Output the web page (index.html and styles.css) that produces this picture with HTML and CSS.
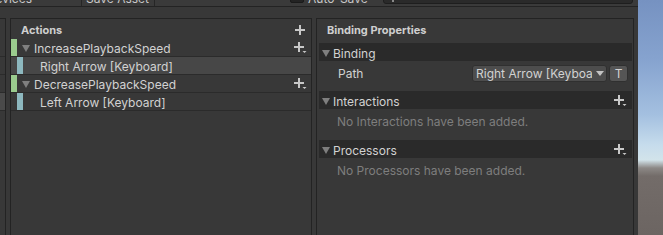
FILE: index.html
```
<!DOCTYPE html>
<html>
<head>
<meta charset="utf-8">
<link rel="stylesheet" href="styles.css">
</head>
<body>
<div class="main">
  <div class="toolbar">
    <div class="tb-btn devices"><span>All Devices</span></div>
    <div class="tb-btn save"><span>Save Asset</span></div>
    <div class="tb-fill"></div>
    <div class="tb-check"></div>
    <div class="tb-label"><span>Auto-Save</span></div>
    <div class="tb-search"><span class="search-mark"></span></div>
  </div>
  <div class="panes">
    <div class="stub">
      <div class="stub-head"></div>
      <div class="stub-row"></div>
      <div class="stub-row"></div>
      <div class="stub-row"></div>
      <div class="stub-row selected"></div>
    </div>
    <section class="panel actions">
      <div class="panel-head">
        <span class="title">Actions</span>
        <svg class="plus" width="10" height="10" viewBox="0 0 10 10"><rect x="0" y="4" width="10" height="2" fill="#c8c8c8"/><rect x="4" y="0" width="2" height="10" fill="#c8c8c8"/></svg>
      </div>
      <div class="row action">
        <span class="bar green"></span><span class="tri"></span><span class="label">IncreasePlaybackSpeed</span>
        <svg class="plus-dd" width="13" height="12" viewBox="0 0 13 12"><rect x="0" y="4" width="10" height="2" fill="#c8c8c8"/><rect x="4" y="0" width="2" height="10" fill="#c8c8c8"/><polygon points="8.5,9 12.5,9 10.5,11" fill="#c8c8c8"/></svg>
      </div>
      <div class="row binding selected">
        <span class="indent"></span><span class="bar blue"></span><span class="label">Right Arrow [Keyboard]</span>
      </div>
      <div class="row action">
        <span class="bar green"></span><span class="tri"></span><span class="label">DecreasePlaybackSpeed</span>
        <svg class="plus-dd" width="13" height="12" viewBox="0 0 13 12"><rect x="0" y="4" width="10" height="2" fill="#c8c8c8"/><rect x="4" y="0" width="2" height="10" fill="#c8c8c8"/><polygon points="8.5,9 12.5,9 10.5,11" fill="#c8c8c8"/></svg>
      </div>
      <div class="row binding">
        <span class="indent"></span><span class="bar blue"></span><span class="label">Left Arrow [Keyboard]</span>
      </div>
    </section>
    <section class="panel props">
      <div class="panel-head">
        <span class="title">Binding Properties</span>
      </div>
      <div class="props-body">
        <div class="fold-head"><span class="tri"></span><span class="fold-title">Binding</span></div>
        <div class="path-row">
          <span class="path-label">Path</span>
          <div class="dropdown"><span class="dd-text">Right Arrow [Keyboard]</span><span class="dd-arrow"></span></div>
          <div class="t-btn">T</div>
        </div>
        <div class="fold-head"><span class="tri"></span><span class="fold-title">Interactions</span>
          <svg class="plus-dd" width="13" height="12" viewBox="0 0 13 12"><rect x="0" y="4" width="10" height="2" fill="#c8c8c8"/><rect x="4" y="0" width="2" height="10" fill="#c8c8c8"/><polygon points="8.5,9 12.5,9 10.5,11" fill="#c8c8c8"/></svg>
        </div>
        <div class="empty">No Interactions have been added.</div>
        <div class="fold-head"><span class="tri"></span><span class="fold-title">Processors</span>
          <svg class="plus-dd" width="13" height="12" viewBox="0 0 13 12"><rect x="0" y="4" width="10" height="2" fill="#c8c8c8"/><rect x="4" y="0" width="2" height="10" fill="#c8c8c8"/><polygon points="8.5,9 12.5,9 10.5,11" fill="#c8c8c8"/></svg>
        </div>
        <div class="empty">No Processors have been added.</div>
      </div>
    </section>
  </div>
</div>
<div class="scene"></div>
</body>
</html>
```

FILE: styles.css
```
* { box-sizing: border-box; margin: 0; padding: 0; }
html, body { width: 663px; height: 235px; overflow: hidden; }
body {
  background: #383838;
  font-family: Inter, "Noto Sans", sans-serif;
  font-size: 12px;
  color: #d2d2d2;
  display: flex;
}
.main { width: 638px; display: flex; flex-direction: column; }
.scene {
  flex: 1;
  background: linear-gradient(to bottom, #7692c1 0px, #86a3cf 60px, #a4c0e0 115px, #c6dcec 145px, #d2e3ea 160px, #8c8886 168px, #736c69 176px, #6c6562 235px);
}

/* toolbar (cropped at the top) */
.toolbar {
  height: 7px;
  border-bottom: 1px solid #232323;
  background: #3a3a3a;
  display: flex;
  align-items: flex-end;
  overflow: hidden;
  line-height: 15px;
  color: #c8c8c8;
}
.tb-btn {
  height: 20px;
  display: flex;
  align-items: flex-end;
  overflow: hidden;
  border-right: 1px solid #262626;
  white-space: nowrap;
}
.devices { width: 82px; justify-content: flex-end; padding-right: 49px; }
.save { width: 73px; padding-left: 4px; }
.tb-fill { width: 135px; }
.tb-check {
  width: 14px; height: 14px;
  margin-bottom: 3px;
  background: #232323;
  border: 1px solid #1a1a1a;
  border-radius: 2px;
}
.tb-label { width: 79px; height: 20px; display: flex; align-items: flex-end; padding-left: 4px; white-space: nowrap; overflow: hidden; }
.tb-search {
  width: 250px; height: 20px;
  margin-bottom: 2px;
  background: #2a2a2a;
  border: 1px solid #1e1e1e;
  border-radius: 3px;
  position: relative;
}
.search-mark {
  position: absolute; left: 8px; bottom: 1px;
  width: 2px; height: 3px; background: #8a8a8a;
}

/* panes */
.panes { flex: 1; display: flex; gap: 4px; margin-top: 11px; }
.stub { width: 6px; border-top: 1px solid #232323; border-right: 1px solid #232323; display: flex; flex-direction: column; }
.stub-head { height: 20px; }
.stub-row { height: 18px; border-bottom: 1px solid #2b2b2b; }
.stub-row.selected { background: #4a4a4a; }

.panel { border: 1px solid #232323; border-bottom: none; display: flex; flex-direction: column; }
.actions { width: 302px; }
.props { width: 318px; }
.panel-head {
  height: 20px;
  display: flex;
  align-items: center;
  justify-content: space-between;
  padding: 0 6px 0 10px;
}
.title { font-size: 11px; font-weight: 700; color: #cfcfcf; margin-top: 1px; }
.plus { margin-top: 1px; }

.row {
  height: 18px;
  border-bottom: 1px solid #2b2b2b;
  display: flex;
  align-items: center;
}
.row.selected { background: #474747; }
.bar { width: 6px; align-self: stretch; }
.green { background: #9acb8e; }
.blue { background: #8db8bf; }
.indent { width: 6px; }
.tri {
  width: 0; height: 0;
  border-left: 4px solid transparent;
  border-right: 4px solid transparent;
  border-top: 7px solid #7f7f7f;
  margin-top: 2px;
}
.action .tri { margin-left: 5px; margin-right: 4px; }
.binding .label { margin-left: 17px; }
.label { white-space: nowrap; margin-top: 2px; }
.row .plus-dd { margin-left: auto; margin-right: 4px; margin-top: 1px; }

/* props */
.props-body { padding: 4px 1px 0 2px; display: flex; flex-direction: column; }
.fold-head {
  height: 18px;
  background: #2a2a2a;
  display: flex;
  align-items: center;
  padding-left: 3px;
}
.fold-title { margin-left: 3px; margin-top: 2px; }
.fold-head .plus-dd { margin-left: auto; margin-right: 5px; margin-top: 1px; }
.path-row {
  height: 30px;
  display: flex;
  align-items: flex-start;
  padding: 4px 4px 0 19px;
}
.path-label { line-height: 17px; }
.dropdown {
  margin-left: auto;
  width: 135px; height: 17px;
  background: #4d4d4d;
  border: 1px solid #303030;
  border-radius: 3px;
  display: flex;
  align-items: center;
  padding-left: 3px;
  overflow: hidden;
}
.dd-text { white-space: nowrap; overflow: hidden; width: 116px; flex: none; line-height: 15px; }
.dd-arrow {
  margin-left: 4px;
  width: 0; height: 0;
  border-left: 4px solid transparent;
  border-right: 4px solid transparent;
  border-top: 5px solid #c4c4c4;
}
.t-btn {
  margin-left: 2px;
  width: 19px; height: 17px;
  background: #555555;
  border: 1px solid #303030;
  border-radius: 3px;
  display: flex; align-items: center; justify-content: center;
  line-height: 15px;
}
.empty {
  color: #7e7e7e;
  line-height: 18px;
  padding: 4px 0 0 18px;
  height: 31px;
}
```
